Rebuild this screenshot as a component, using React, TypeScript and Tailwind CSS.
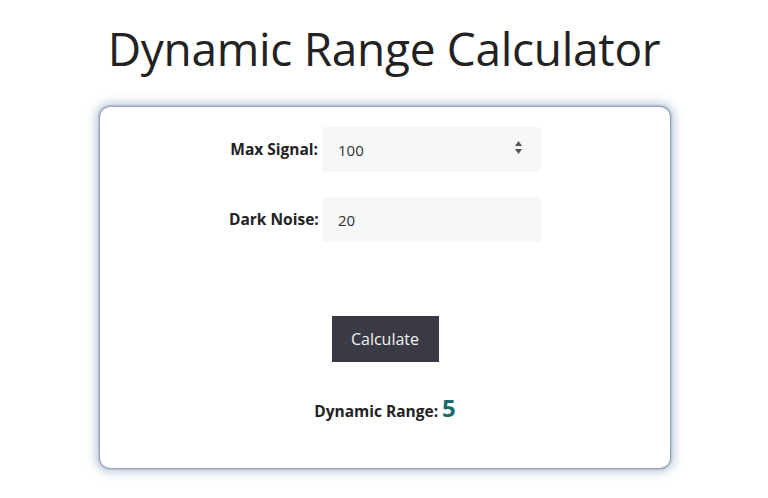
import { useState } from "react";

export default function App() {
  const [maxSignal, setMaxSignal] = useState("100");
  const [darkNoise, setDarkNoise] = useState("20");
  const [result, setResult] = useState<number | null>(5);

  const calculate = () => {
    const s = parseFloat(maxSignal);
    const n = parseFloat(darkNoise);
    if (!isNaN(s) && !isNaN(n) && n !== 0) setResult(s / n);
  };

  return (
    <div className="min-h-screen bg-white font-['Open_Sans',sans-serif] text-[#222]">
      <h1 className="pt-[18px] text-center text-[46px] leading-[60px] font-normal text-[#222] tracking-[-0.3px]">
        Dynamic Range Calculator
      </h1>
      <div className="mx-auto mt-[29px] w-[570px] translate-x-[1px] rounded-[10px] bg-white px-5 pt-5 pb-[42px] shadow-[0_0_2px_1px_rgba(120,140,165,0.9),0_0_11px_3px_rgba(110,140,175,0.55)]">
        <div className="flex items-center justify-center">
          <label className="w-[93px] shrink-0 whitespace-nowrap pr-1 text-right text-[15.5px] font-bold">Max Signal:</label>
          <div className="relative">
            <input
              type="text"
              value={maxSignal}
              onChange={(e) => setMaxSignal(e.target.value)}
              className="h-[45px] w-[219px] rounded-[2px] bg-[#f6f7f9] px-4 text-[15px] text-[#333] outline-none"
            />
            <div className="pointer-events-none absolute top-[14px] right-[19px] flex flex-col items-center gap-[3px]">
              <svg width="7" height="5" viewBox="0 0 7 5"><path d="M3.5 0L7 5H0z" fill="#555" /></svg>
              <svg width="7" height="5" viewBox="0 0 7 5"><path d="M0 0h7L3.5 5z" fill="#555" /></svg>
            </div>
          </div>
        </div>
        <div className="mt-[25px] flex items-center justify-center">
          <label className="w-[93px] shrink-0 whitespace-nowrap pr-1 text-right text-[15.5px] font-bold">Dark Noise:</label>
          <input
            type="text"
            value={darkNoise}
            onChange={(e) => setDarkNoise(e.target.value)}
            className="h-[45px] w-[219px] rounded-[2px] bg-[#f6f7f9] px-4 text-[15px] text-[#333] outline-none"
          />
        </div>
        <div className="mt-[74px] flex justify-center">
          <button
            onClick={calculate}
            className="h-[46px] w-[107px] bg-[#393a43] text-[16px] text-[#f2f2f2]"
          >
            Calculate
          </button>
        </div>
        <div className="mt-[28px] text-center text-[15.5px] font-bold">
          Dynamic Range:{" "}
          <span className="text-[24px] text-[#1d6b6e]">{result !== null ? result : ""}</span>
        </div>
      </div>
    </div>
  );
}
